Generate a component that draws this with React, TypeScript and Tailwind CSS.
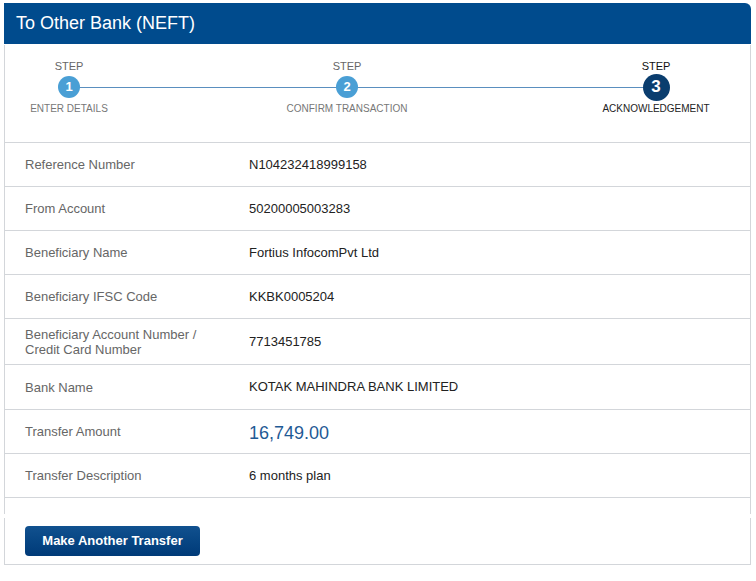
const rows: { label: string; value: string; h: string; amount?: boolean }[] = [
  { label: "Reference Number", value: "N104232418999158", h: "h-[44px]" },
  { label: "From Account", value: "50200005003283", h: "h-[44px]" },
  { label: "Beneficiary Name", value: "Fortius InfocomPvt Ltd", h: "h-[44px]" },
  { label: "Beneficiary IFSC Code", value: "KKBK0005204", h: "h-[44px]" },
  { label: "Beneficiary Account Number / Credit Card Number", value: "7713451785", h: "h-[46px]" },
  { label: "Bank Name", value: "KOTAK MAHINDRA BANK LIMITED", h: "h-[45px]" },
  { label: "Transfer Amount", value: "16,749.00", h: "h-[44px]", amount: true },
  { label: "Transfer Description", value: "6 months plan", h: "h-[44px]" },
];

const Step = ({ n, label, active }: { n: number; label: string; active?: boolean }) => (
  <div className="relative z-10 flex w-[120px] flex-col items-center whitespace-nowrap">
    <span className={`text-[11px] leading-[13px] ${active ? "text-[#111]" : "text-[#666]"}`}>STEP</span>
    <div className="flex h-[28px] items-center justify-center">
      {active ? (
        <span className="flex h-[27px] w-[27px] items-center justify-center rounded-full bg-[#0a3d6e] text-[17px] font-bold text-white">
          {n}
        </span>
      ) : (
        <span className="flex h-[22px] w-[22px] items-center justify-center rounded-full bg-[#4a9fd5] text-[13px] font-bold text-white">
          {n}
        </span>
      )}
    </div>
    <span className={`mt-[2px] text-[10px] leading-[12px] ${active ? "text-[#222]" : "text-[#777]"}`}>{label}</span>
  </div>
);

export default function App() {
  return (
    <div className="min-h-[581px] bg-white pl-[4px] pr-[5px] pt-[3px] font-['Liberation_Sans',Arial,sans-serif]">
      <div className="flex h-[41px] items-center rounded-tr-[6px] bg-[#004b8d] pl-[12px]">
        <h1 className="text-[18px] text-white">To Other Bank (NEFT)</h1>
      </div>

      <div className="border-x border-[#d3d6da]">
        {/* Steps */}
        <div className="relative mt-[1px] flex h-[98px] border-b border-[#d3d6da] pl-[4px] pt-[15px]">
          <div className="absolute left-[64px] top-[42px] h-[1px] w-[588px] bg-[#5a8fbf]" />
          <Step n={1} label="ENTER DETAILS" />
          <div className="ml-[158px]">
            <Step n={2} label="CONFIRM TRANSACTION" />
          </div>
          <div className="ml-[189px]">
            <Step n={3} label="ACKNOWLEDGEMENT" active />
          </div>
        </div>

        {/* Details */}
        {rows.map((r) => (
          <div
            key={r.label}
            className={`flex items-center border-b border-[#d3d6da] ${r.h}`}
          >
            <div className="w-[244px] pl-[20px] pr-[40px] text-[13px] leading-[15px] text-[#666]">{r.label}</div>
            <div className={r.amount ? "pt-[3px] text-[18px] text-[#1f5a95]" : "text-[13px] text-[#222]"}>{r.value}</div>
          </div>
        ))}
        <div className="h-[16px]" />
      </div>

      <div className="mt-[4px] flex h-[47px] items-start border-x border-b border-[#d3d6da] pl-[20px] pt-[8px]">
        <button className="h-[30px] w-[175px] rounded-[4px] bg-gradient-to-b from-[#11518f] to-[#003a78] text-[13px] font-bold text-white">
          Make Another Transfer
        </button>
      </div>
    </div>
  );
}
